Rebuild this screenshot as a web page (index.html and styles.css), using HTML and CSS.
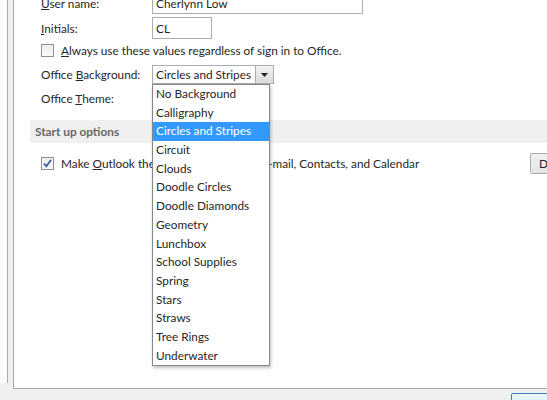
FILE: index.html
```html
<!DOCTYPE html>
<html lang="en">
<head>
    <meta charset="UTF-8">
    <title>Outlook Options - General</title>
    <link rel="stylesheet" href="styles.css">
</head>
<body>

    <div class="window">
        <div class="sidebar"></div>

        <div class="panel">
            <!-- Personalize your copy of Office -->
            <div class="form">
                <div class="row">
                    <span class="label"><u>U</u>ser name:</span>
                    <div class="input wide">Cherlynn Low</div>
                </div>
                <div class="row">
                    <span class="label"><u>I</u>nitials:</span>
                    <div class="input short">CL</div>
                </div>
                <div class="check-row">
                    <span class="checkbox"></span>
                    <span><u>A</u>lways use these values regardless of sign in to Office.</span>
                </div>
                <div class="row combo-row">
                    <span class="label">Office <u>B</u>ackground:</span>
                    <div class="combo">
                        <span>Circles and Stripes</span>
                        <span class="combo-btn">
                            <svg width="7" height="4" viewBox="0 0 7 4"><path d="M0 0h7L3.5 4z" fill="#222"/></svg>
                        </span>
                    </div>
                </div>
                <div class="row theme-row">
                    <span class="label">Office <u>T</u>heme:</span>
                </div>
            </div>

            <!-- Start up options -->
            <div class="section-head">Start up options</div>
            <div class="check-row startup">
                <span class="checkbox checked">
                    <svg width="9" height="9" viewBox="0 0 9 9"><path d="M1 4.5l2.3 2.8L8 1" fill="none" stroke="#3d5a9e" stroke-width="1.8"/></svg>
                </span>
                <span class="startup-text">Make <u>O</u>utlook the default program for E-mail, Contacts, and Calendar</span>
                <button class="btn">Default Programs...</button>
            </div>

            <!-- Open dropdown list -->
            <ul class="dropdown">
                <li>No Background</li>
                <li>Calligraphy</li>
                <li class="selected">Circles and Stripes</li>
                <li>Circuit</li>
                <li>Clouds</li>
                <li>Doodle Circles</li>
                <li>Doodle Diamonds</li>
                <li>Geometry</li>
                <li>Lunchbox</li>
                <li>School Supplies</li>
                <li>Spring</li>
                <li>Stars</li>
                <li>Straws</li>
                <li>Tree Rings</li>
                <li>Underwater</li>
            </ul>
        </div>
    </div>

    <div class="footer">
        <button class="btn default">OK</button>
        <button class="btn">Cancel</button>
    </div>

</body>
</html>
```

FILE: styles.css
```css
body {
    margin: 0;
    width: 660px;
    height: 400px;
    overflow: hidden;
    background: #f0f0f0;
    font-family: Lato, "Noto Sans", sans-serif;
    font-size: 11.8px;
    color: #262626;
}

.window {
    display: flex;
    gap: 5px;
    height: 389px;
}

.sidebar {
    width: 7px;
    height: 383px;
    background: #fbfbfb;
    border-right: 1px solid #a8a8a8;
}

.panel {
    flex: 1;
    position: relative;
    background: #fff;
    border-left: 1px solid #a8a8a8;
    border-bottom: 1px solid #a8a8a8;
}

.form {
    margin-top: -8px;
    padding-left: 27px;
    display: flex;
    flex-direction: column;
}

.row {
    display: flex;
    align-items: center;
    height: 22px;
    margin-bottom: 3px;
}

.label {
    width: 111px;
}

.input {
    box-sizing: border-box;
    height: 22px;
    border: 1px solid #abadb3;
    padding: 3px 3px 0;
}

.input.wide {
    width: 211px;
}

.input.short {
    width: 60px;
}

.check-row {
    display: flex;
    align-items: center;
    gap: 7px;
    height: 13px;
    margin: 2px 0 8px;
}

.checkbox {
    box-sizing: border-box;
    flex: none;
    width: 13px;
    height: 13px;
    border: 1px solid #8f8f8f;
    background: linear-gradient(#ededed, #fafafa);
    display: flex;
    align-items: center;
    justify-content: center;
}

.combo-row {
    height: 19px;
}

.combo {
    box-sizing: border-box;
    width: 122px;
    height: 19px;
    border: 1px solid #abadb3;
    display: flex;
    align-items: center;
    justify-content: space-between;
    padding-left: 3px;
}

.combo-btn {
    box-sizing: border-box;
    width: 18px;
    height: 17px;
    border-left: 1px solid #adadad;
    background: linear-gradient(#f2f2f2, #dcdcdc);
    display: flex;
    align-items: center;
    justify-content: center;
}

.theme-row {
    height: 18px;
    margin-top: 2px;
}

.section-head {
    margin: 10px 0 0 16px;
    height: 23px;
    line-height: 23px;
    padding-left: 5px;
    background: #f0f0f0;
    color: #666;
    font-weight: bold;
}

.startup {
    height: 20px;
    margin: 10px 0 0;
    padding: 0 15px 0 27px;
}

.startup-text {
    flex: 1;
}

.btn {
    box-sizing: border-box;
    flex: none;
    width: 115px;
    height: 21px;
    border: 1px solid #acacac;
    border-radius: 2px;
    background: linear-gradient(#f0f0f0, #e5e5e5);
    font: inherit;
    color: #262626;
    padding: 0 8px;
    white-space: nowrap;
}

.dropdown {
    position: absolute;
    left: 138px;
    top: 84px;
    width: 116px;
    margin: 0;
    padding: 0;
    list-style: none;
    background: #fff;
    border: 1px solid #828790;
    box-shadow: 1px 2px 3px rgba(0, 0, 0, 0.25);
}

.dropdown li {
    height: 18.7px;
    line-height: 18.7px;
    padding-left: 3px;
    white-space: nowrap;
}

.dropdown li.selected {
    background: #3399ff;
    color: #fff;
}

.footer {
    display: flex;
    gap: 8px;
    padding: 4px 0 0 511px;
}

.footer .btn {
    width: 75px;
    height: 23px;
}

.footer .btn.default {
    border-color: #3c7fb1;
    background: linear-gradient(#eaf6fd, #d9f0fc);
}
```
